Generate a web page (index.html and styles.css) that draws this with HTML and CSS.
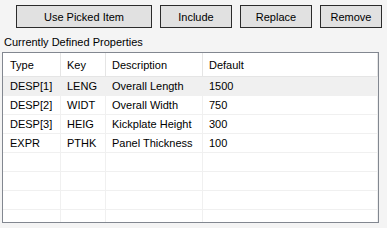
FILE: index.html
```html
<!DOCTYPE html>
<html lang="en">
<head>
    <meta charset="UTF-8">
    <title>Properties</title>
    <link rel="stylesheet" href="styles.css">
</head>
<body>

<div class="toolbar">
    <button type="button" class="btn btn-wide">Use Picked Item</button>
    <button type="button" class="btn">Include</button>
    <button type="button" class="btn">Replace</button>
    <button type="button" class="btn btn-small">Remove</button>
</div>

<div class="caption">Currently Defined Properties</div>

<div class="list">
    <table class="props">
        <thead>
            <tr>
                <th class="col-type">Type</th>
                <th class="col-key">Key</th>
                <th class="col-desc">Description</th>
                <th class="col-def">Default</th>
            </tr>
        </thead>
        <tbody>
            <tr class="selected"><td>DESP[1]</td><td>LENG</td><td>Overall Length</td><td>1500</td></tr>
            <tr><td>DESP[2]</td><td>WIDT</td><td>Overall Width</td><td>750</td></tr>
            <tr><td>DESP[3]</td><td>HEIG</td><td>Kickplate Height</td><td>300</td></tr>
            <tr><td>EXPR</td><td>PTHK</td><td>Panel Thickness</td><td>100</td></tr>
            <tr><td></td><td></td><td></td><td></td></tr>
            <tr><td></td><td></td><td></td><td></td></tr>
            <tr><td></td><td></td><td></td><td></td></tr>
            <tr><td></td><td></td><td></td><td></td></tr>
        </tbody>
    </table>
</div>

</body>
</html>
```

FILE: styles.css
```css
/* Global */
body {
    margin: 0;
    background: #f4f4f4;
    font-family: 'Liberation Sans', Arial, sans-serif;
    font-size: 11px;
    color: #000;
}

/* Buttons */
.toolbar {
    display: flex;
    gap: 8px;
    padding: 5px 0 0 16px;
}

.btn {
    width: 72px;
    height: 23px;
    padding: 0;
    background: #e1e1e1;
    border: 1px solid #2b2b2b;
    font-family: inherit;
    font-size: 11px;
    color: #000;
}

.btn-wide {
    width: 136px;
}

.btn-small {
    width: 62px;
}

/* Caption */
.caption {
    margin: 8px 0 0 4px;
    line-height: 13px;
}

/* List view */
.list {
    margin: 3px 0 0 2px;
    width: 375px;
    height: 169px;
    border: 1px solid #828790;
    background: #fff;
    overflow: hidden;
}

.props {
    border-collapse: collapse;
    table-layout: fixed;
    width: 374px;
}

.props th,
.props td {
    padding: 0 0 0 6px;
    text-align: left;
    font-weight: normal;
    white-space: nowrap;
    overflow: hidden;
}

.props th {
    height: 23px;
    border-right: 1px solid #e5e5e5;
    border-bottom: 1px solid #e5e5e5;
}

.props td {
    height: 18px;
    border-right: 1px solid #f0f0f0;
    border-bottom: 1px solid #f0f0f0;
}

.props th:first-child,
.props td:first-child {
    padding-left: 7px;
}

.col-type { width: 50px; }
.col-key { width: 38px; }
.col-desc { width: 90px; }
.col-def { width: 168px; }

.props tr.selected td {
    background: #f0f0f0;
}
```
